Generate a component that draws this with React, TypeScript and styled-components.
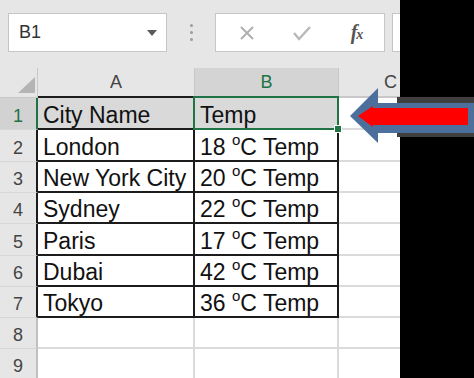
import React from "react";
import styled, { createGlobalStyle } from "styled-components";

const GREEN = "#217346";
const INK = "#1c1c1c";
const GRID = "#dadada";

const Global = createGlobalStyle`
  html, body { margin: 0; padding: 0; background: #000; }
  body { width: 474px; height: 378px; overflow: hidden; }
`;

const Frame = styled.div`
  position: relative;
  display: flex;
  width: 474px;
  height: 378px;
  overflow: hidden;
  font-family: "Liberation Sans", Arial, sans-serif;
`;

const Sheet = styled.div`
  width: 400px;
  flex: none;
  display: flex;
  flex-direction: column;
  background: #e6e6e6;
  overflow: hidden;
`;

const Blackout = styled.div`
  flex: 1;
  background: #000;
`;

const Toolbar = styled.div`
  height: 68px;
  flex: none;
  box-sizing: border-box;
  display: flex;
  align-items: flex-start;
  padding: 13px 0 0 8px;
`;

const NameBox = styled.div`
  flex: none;
  width: 159px;
  height: 39px;
  box-sizing: border-box;
  background: #fff;
  border: 1px solid #c6c6c6;
  display: flex;
  align-items: center;
  justify-content: space-between;
  padding: 0 9px 0 10px;
`;

const NameText = styled.span`
  font-size: 18px;
  color: #333;
`;

const Caret = styled.span`
  width: 0;
  height: 0;
  border-left: 5px solid transparent;
  border-right: 5px solid transparent;
  border-top: 6px solid #5a5a5a;
`;

const Grip = styled.div`
  flex: none;
  width: 48px;
  height: 39px;
  display: flex;
  flex-direction: column;
  align-items: center;
  justify-content: center;
  gap: 4px;
`;

const Dot = styled.span`
  width: 3px;
  height: 3px;
  border-radius: 50%;
  background: #9c9c9c;
`;

const FormulaButtons = styled.div`
  flex: none;
  width: 170px;
  height: 39px;
  box-sizing: border-box;
  background: #fff;
  border: 1px solid #c6c6c6;
  display: flex;
  align-items: center;
  padding-left: 3px;
`;

const ToolButton = styled.div`
  width: 55px;
  height: 100%;
  display: flex;
  align-items: center;
  justify-content: center;
`;

const Fx = styled.span`
  font-family: "Liberation Serif", "Times New Roman", serif;
  font-style: italic;
  font-weight: bold;
  font-size: 20px;
  color: #555;
  letter-spacing: -1px;
`;

const FxSub = styled.span`
  font-size: 14px;
`;

const FormulaInput = styled.div`
  flex: none;
  margin-left: 7px;
  width: 100px;
  height: 39px;
  box-sizing: border-box;
  background: #fff;
  border: 1px solid #c6c6c6;
`;

const Grid = styled.div`
  flex: none;
  display: grid;
  grid-template-columns: 38px 157px 144px 104px;
  grid-template-rows: 30px 32px 32px 31px 31px 32px 31px 31px 31px 31px;
  background: #fff;
`;

const Corner = styled.div`
  box-sizing: border-box;
  background: #e6e6e6;
  border-right: 1px solid #c8c8c8;
  border-bottom: 1px solid #c8c8c8;
  display: flex;
  justify-content: flex-end;
  align-items: flex-end;
  padding: 0 2px 4px 0;
`;

const SelectAll = styled.span`
  width: 0;
  height: 0;
  border-left: 17px solid transparent;
  border-bottom: 16px solid #b4b4b4;
`;

const ColHeader = styled.div<{ $active?: boolean; $edge: string }>`
  box-sizing: border-box;
  background: ${(p) => (p.$active ? "#d4d4d4" : "#e6e6e6")};
  border-right: 1px solid #c8c8c8;
  border-bottom: 2px solid ${(p) => p.$edge};
  display: flex;
  align-items: center;
  justify-content: center;
  font-size: 18px;
  line-height: 20px;
  color: ${(p) => (p.$active ? GREEN : "#444")};
`;

const RowHeader = styled.div<{ $active?: boolean; $edge: string }>`
  box-sizing: border-box;
  background: ${(p) => (p.$active ? "#d2d2d2" : "#e6e6e6")};
  border-right: 2px solid ${(p) => p.$edge};
  border-bottom: 1px solid #d6d6d6;
  display: flex;
  align-items: flex-end;
  justify-content: center;
  padding-bottom: 3px;
  font-size: 18px;
  line-height: 20px;
  color: ${(p) => (p.$active ? GREEN : "#444")};
`;

const Cell = styled.div<{ $fill?: boolean; $right: string; $bottom: string }>`
  position: relative;
  box-sizing: border-box;
  background: ${(p) => (p.$fill ? "#d9d9d9" : "#fff")};
  border-right: 2px solid ${(p) => p.$right};
  border-bottom: 2px solid ${(p) => p.$bottom};
  display: flex;
  align-items: flex-end;
  padding: 0 0 0 5px;
  font-size: 23px;
  line-height: 25px;
  color: #111;
  white-space: nowrap;
`;

const Deg = styled.span`
  font-size: 15px;
  vertical-align: 10px;
  line-height: 0;
`;

const SelectionFrame = styled.div`
  position: absolute;
  z-index: 2;
  top: -2px;
  left: -2px;
  right: -2px;
  bottom: -2px;
  border: 2px solid ${GREEN};
  pointer-events: none;
`;

const FillHandle = styled.span`
  position: absolute;
  right: -5px;
  bottom: -5px;
  width: 6px;
  height: 6px;
  background: ${GREEN};
  border: 1px solid #fff;
`;

const ArrowMark = styled.svg`
  position: absolute;
  z-index: 3;
  left: 348px;
  top: 84px;
`;

const data: [string, number | null][] = [
  ["City Name", null],
  ["London", 18],
  ["New York City", 20],
  ["Sydney", 22],
  ["Paris", 17],
  ["Dubai", 42],
  ["Tokyo", 36],
];

function Temp({ n }: { n: number }) {
  return (
    <span>
      {n} <Deg>o</Deg>C Temp
    </span>
  );
}

export default function App() {
  return (
    <>
      <Global />
      <Frame>
        <Sheet>
          <Toolbar>
            <NameBox>
              <NameText>B1</NameText>
              <Caret />
            </NameBox>
            <Grip>
              <Dot />
              <Dot />
              <Dot />
            </Grip>
            <FormulaButtons>
              <ToolButton>
                <svg width="16" height="16" viewBox="0 0 16 16">
                  <path d="M2 2 L14 14 M14 2 L2 14" stroke="#b0b0b0" strokeWidth="2" fill="none" />
                </svg>
              </ToolButton>
              <ToolButton>
                <svg width="20" height="16" viewBox="0 0 20 16">
                  <path d="M2 8 L7 14 L18 2" stroke="#b8b8b8" strokeWidth="2.4" fill="none" />
                </svg>
              </ToolButton>
              <ToolButton>
                <Fx>
                  f<FxSub>x</FxSub>
                </Fx>
              </ToolButton>
            </FormulaButtons>
            <FormulaInput />
          </Toolbar>
          <Grid>
            <Corner>
              <SelectAll />
            </Corner>
            <ColHeader $edge={INK}>A</ColHeader>
            <ColHeader $edge={GREEN} $active>
              B
            </ColHeader>
            <ColHeader $edge="#c8c8c8">C</ColHeader>
            {data.map(([city, t], i) => {
              const first = i === 0;
              return (
                <React.Fragment key={city}>
                  <RowHeader $active={first} $edge={first ? GREEN : INK}>
                    {i + 1}
                  </RowHeader>
                  <Cell $fill={first} $right={INK} $bottom={INK}>
                    {city}
                  </Cell>
                  <Cell $fill={first} $right={INK} $bottom={INK}>
                    {first ? "Temp" : <Temp n={t as number} />}
                    {first && (
                      <SelectionFrame>
                        <FillHandle />
                      </SelectionFrame>
                    )}
                  </Cell>
                  <Cell $right={GRID} $bottom={GRID} />
                </React.Fragment>
              );
            })}
            {[8, 9].map((r) => (
              <React.Fragment key={r}>
                <RowHeader $edge="#c0c0c0">{r}</RowHeader>
                <Cell $right={GRID} $bottom={GRID} />
                <Cell $right={GRID} $bottom={GRID} />
                <Cell $right={GRID} $bottom={GRID} />
              </React.Fragment>
            ))}
          </Grid>
        </Sheet>
        <Blackout />
        <ArrowMark width="126" height="62" viewBox="0 0 126 62">
          <rect x="49" y="13" width="77" height="40" fill="#3f3f3f" />
          <polygon points="2,32 30,4 30,19 126,19 126,49 30,49 30,59" fill="#4c6f9c" />
          <polygon points="10,32 25,22 25,24 120,24 120,41 25,41 25,43" fill="#ff0000" />
        </ArrowMark>
      </Frame>
    </>
  );
}
